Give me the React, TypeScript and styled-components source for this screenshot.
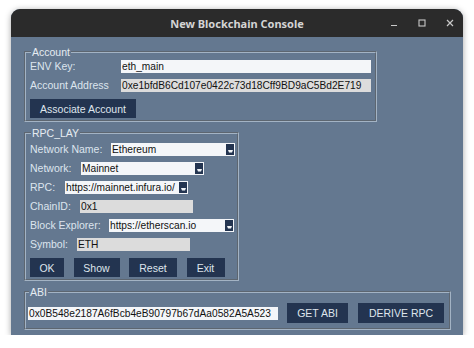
import React from 'react';
import styled, { createGlobalStyle } from 'styled-components';

const GlobalStyle = createGlobalStyle`
  html, body {
    margin: 0;
    padding: 0;
    background: #ffffff;
  }
  body {
    font-family: "Liberation Sans", Arial, sans-serif;
  }
`;

const Page = styled.div`
  padding: 9px 0 0 11px;
`;

const Window = styled.div`
  width: 452px;
  height: 326px;
  border-radius: 9px 9px 0 0;
  overflow: hidden;
  background: #647890;
  box-shadow: 0 1px 6px rgba(0, 0, 0, 0.35);
  display: flex;
  flex-direction: column;
`;

const TitleBar = styled.div`
  flex: none;
  height: 28px;
  background: #2b2b2b;
  display: grid;
  grid-template-columns: 1fr auto 1fr;
  align-items: center;
`;

const Title = styled.div`
  grid-column: 2;
  font-family: "Noto Sans", "DejaVu Sans", sans-serif;
  font-weight: 700;
  font-size: 11px;
  color: #d4d4d4;
`;

const Controls = styled.div`
  grid-column: 3;
  display: flex;
  justify-content: flex-end;
  align-items: center;
  gap: 12px;
  padding-right: 5px;
`;

const Ctl = styled.div`
  width: 16px;
  height: 16px;
  display: flex;
  align-items: center;
  justify-content: center;
`;

const Body = styled.div`
  flex: 1;
  padding: 9px 0 5px 13px;
  display: flex;
  flex-direction: column;
  gap: 5px;
`;

const Frame = styled.fieldset<{ w: number; pad: string }>`
  width: ${(p) => p.w}px;
  box-sizing: border-box;
  margin: 0;
  min-width: 0;
  padding: ${(p) => p.pad};
  border: 2px groove #a3b3c4;
`;

const Legend = styled.legend`
  font-size: 10.5px;
  line-height: 12px;
  color: #e6ecf2;
  padding: 0 1px;
  margin-left: 1px;
`;

const Label = styled.span`
  font-size: 10.5px;
  color: #dde5ee;
  white-space: nowrap;
  line-height: 13px;
`;

const AccountGrid = styled.div`
  display: grid;
  grid-template-columns: 91px 250px;
  row-gap: 6px;
  align-items: center;
`;

const Entry = styled.div<{ w?: number; readOnly?: boolean }>`
  width: ${(p) => (p.w ? `${p.w}px` : 'auto')};
  height: 13px;
  box-sizing: border-box;
  padding: 0 1px;
  background: ${(p) => (p.readOnly ? '#dcdcdc' : '#f4f6f9')};
  color: #111;
  font-size: 10.2px;
  line-height: 13px;
  white-space: nowrap;
  overflow: hidden;
`;

const Button = styled.div<{ w: number; h?: number }>`
  width: ${(p) => p.w}px;
  height: ${(p) => p.h ?? 19}px;
  background: #233450;
  color: #dfe5ec;
  font-size: 10.5px;
  display: flex;
  align-items: center;
  justify-content: center;
  white-space: nowrap;
`;

const AssocRow = styled.div`
  margin-top: 7px;
`;

const RpcRows = styled.div`
  display: flex;
  flex-direction: column;
  gap: 6px;
`;

const Row = styled.div<{ lw: number }>`
  display: grid;
  grid-template-columns: ${(p) => p.lw}px auto;
  align-items: center;
`;

const Combo = styled.div<{ w: number }>`
  width: ${(p) => p.w}px;
  height: 13px;
  box-sizing: border-box;
  background: #f4f6f9;
  display: flex;
  align-items: center;
  padding-left: 1px;
  padding-right: 1px;
`;

const ComboText = styled.span`
  flex: 1;
  font-size: 10.2px;
  color: #111;
  white-space: nowrap;
  overflow: hidden;
`;

const Arrow = styled.div`
  flex: none;
  width: 8px;
  height: 11px;
  background: #233450;
  display: flex;
  align-items: flex-end;
  justify-content: center;
  padding-bottom: 2px;
  box-sizing: border-box;
`;

const ButtonRow = styled.div`
  display: flex;
  gap: 9.5px;
  margin-top: 1px;
`;

const AbiRow = styled.div`
  display: flex;
  align-items: center;
`;

const AbiButtons = styled.div`
  display: flex;
  gap: 10px;
  margin-left: 9px;
`;

function ComboBox({ w, value }: { w: number; value: string }) {
  return (
    <Combo w={w}>
      <ComboText>{value}</ComboText>
      <Arrow>
        <svg width="5" height="3" viewBox="0 0 5 3">
          <path d="M0 0 H5 L4 2.5 H1 Z" fill="#f0f3f6" />
        </svg>
      </Arrow>
    </Combo>
  );
}

export default function App() {
  return (
    <>
      <GlobalStyle />
      <Page>
        <Window>
          <TitleBar>
            <Title>New Blockchain Console</Title>
            <Controls>
              <Ctl>
                <svg width="8" height="8" viewBox="0 0 8 8">
                  <path d="M1 6.5 H7" stroke="#c9c9c9" strokeWidth="1.2" />
                </svg>
              </Ctl>
              <Ctl>
                <svg width="8" height="8" viewBox="0 0 8 8">
                  <rect x="1" y="1" width="6" height="6" fill="none" stroke="#c9c9c9" strokeWidth="1.1" />
                </svg>
              </Ctl>
              <Ctl>
                <svg width="8" height="8" viewBox="0 0 8 8">
                  <path d="M1 1 L7 7 M7 1 L1 7" stroke="#c9c9c9" strokeWidth="1.2" />
                </svg>
              </Ctl>
            </Controls>
          </TitleBar>
          <Body>
            <Frame w={353} pad="2px 4px 2px 4px">
              <Legend>Account</Legend>
              <AccountGrid>
                <Label>ENV Key:</Label>
                <Entry>eth_main</Entry>
                <Label>Account Address</Label>
                <Entry readOnly>0xe1bfdB6Cd107e0422c73d18Cff9BD9aC5Bd2E719</Entry>
              </AccountGrid>
              <AssocRow>
                <Button w={106}>Associate Account</Button>
              </AssocRow>
            </Frame>

            <Frame w={215} pad="4px 4px 2px 4px">
              <Legend>RPC_LAY</Legend>
              <RpcRows>
                <Row lw={81}>
                  <Label>Network Name:</Label>
                  <ComboBox w={124} value="Ethereum" />
                </Row>
                <Row lw={51}>
                  <Label>Network:</Label>
                  <ComboBox w={123} value="Mainnet" />
                </Row>
                <Row lw={35}>
                  <Label>RPC:</Label>
                  <ComboBox w={123} value="https://mainnet.infura.io/" />
                </Row>
                <Row lw={50}>
                  <Label>ChainID:</Label>
                  <Entry w={113} readOnly>0x1</Entry>
                </Row>
                <Row lw={79}>
                  <Label>Block Explorer:</Label>
                  <ComboBox w={125} value="https://etherscan.io" />
                </Row>
                <Row lw={47}>
                  <Label>Symbol:</Label>
                  <Entry w={113} readOnly>ETH</Entry>
                </Row>
                <ButtonRow>
                  <Button w={34}>OK</Button>
                  <Button w={46}>Show</Button>
                  <Button w={48}>Reset</Button>
                  <Button w={38}>Exit</Button>
                </ButtonRow>
              </RpcRows>
            </Frame>

            <Frame w={427} pad="5px 5px 5px 2px">
              <Legend>ABI</Legend>
              <AbiRow>
                <Entry w={250}>0x0B548e2187A6fBcb4eB90797b67dAa0582A5A523</Entry>
                <AbiButtons>
                  <Button w={61} h={20}>GET ABI</Button>
                  <Button w={86} h={20}>DERIVE RPC</Button>
                </AbiButtons>
              </AbiRow>
            </Frame>
          </Body>
        </Window>
      </Page>
    </>
  );
}
